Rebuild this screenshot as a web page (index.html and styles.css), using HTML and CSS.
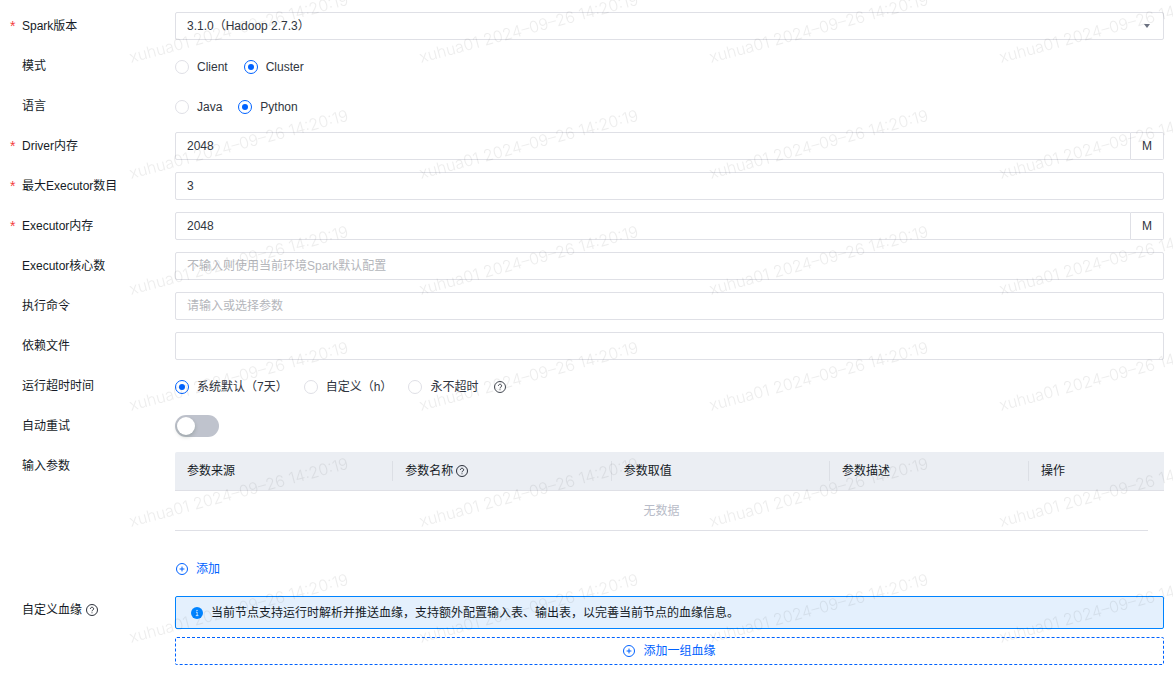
FILE: index.html
```html
<!DOCTYPE html>
<html lang="zh-CN">
<head>
<meta charset="utf-8">
<meta name="viewport" content="width=device-width, initial-scale=1">
<title>Spark节点配置</title>
<link rel="stylesheet" href="styles.css">
</head>
<body>
<svg class="sprite" aria-hidden="true">
  <symbol id="icon-help" viewBox="0 0 12 12">
    <circle cx="6" cy="6" r="5.5" fill="none" stroke="currentColor" stroke-width=".9"/>
    <path d="M4.4 4.8a1.6 1.5 0 1 1 2.5 1.2c-.6.4-.9.7-.9 1.3" fill="none" stroke="currentColor" stroke-width=".9"/>
    <circle cx="6" cy="8.7" r=".5" fill="currentColor"/>
  </symbol>
  <symbol id="icon-plus" viewBox="0 0 12 12">
    <circle cx="6" cy="6" r="5.5" fill="none" stroke="currentColor"/>
    <path d="M6 3.6v4.8M3.6 6h4.8" fill="none" stroke="currentColor"/>
  </symbol>
  <symbol id="icon-info" viewBox="0 0 12 12">
    <circle cx="6" cy="6" r="6" fill="#0083ff"/>
    <path d="M5 5.2h1.2v3.3M4.8 8.6h2.6" fill="none" stroke="#d6eaff" stroke-width=".9"/>
    <circle cx="6" cy="3.4" r=".7" fill="#d6eaff"/>
  </symbol>
</svg>

<form class="form">
  <div class="row">
    <label class="label required" for="version">Spark版本</label>
    <div class="select-box">
      <select class="field" id="version"><option>3.1.0（Hadoop 2.7.3）</option></select>
      <svg class="caret" viewBox="0 0 6 4" aria-hidden="true"><path d="M0 0h6L3 4z" fill="#6b7180"/></svg>
    </div>
  </div>
  <div class="row" role="radiogroup" aria-labelledby="mode">
    <span class="label" id="mode">模式</span>
    <div class="radios">
      <label class="radio"><input type="radio" name="mode">Client</label>
      <label class="radio"><input type="radio" name="mode" checked>Cluster</label>
    </div>
  </div>
  <div class="row" role="radiogroup" aria-labelledby="language">
    <span class="label" id="language">语言</span>
    <div class="radios">
      <label class="radio"><input type="radio" name="language">Java</label>
      <label class="radio"><input type="radio" name="language" checked>Python</label>
    </div>
  </div>
  <div class="row">
    <label class="label required" for="driver">Driver内存</label>
    <div class="group"><input class="field" id="driver" type="text" value="2048"><span class="unit">M</span></div>
  </div>
  <div class="row">
    <label class="label required" for="executors">最大Executor数目</label>
    <input class="field" id="executors" type="text" value="3">
  </div>
  <div class="row">
    <label class="label required" for="memory">Executor内存</label>
    <div class="group"><input class="field" id="memory" type="text" value="2048"><span class="unit">M</span></div>
  </div>
  <div class="row">
    <label class="label" for="cores">Executor核心数</label>
    <input class="field" id="cores" type="text" placeholder="不输入则使用当前环境Spark默认配置">
  </div>
  <div class="row">
    <label class="label" for="command">执行命令</label>
    <input class="field" id="command" type="text" placeholder="请输入或选择参数">
  </div>
  <div class="row">
    <label class="label" for="files">依赖文件</label>
    <input class="field" id="files" type="text">
  </div>
  <div class="row" role="radiogroup" aria-labelledby="timeout">
    <span class="label" id="timeout">运行超时时间</span>
    <div class="radios">
      <label class="radio"><input type="radio" name="timeout" checked>系统默认（7天）</label>
      <label class="radio"><input type="radio" name="timeout">自定义（h）</label>
      <label class="radio"><input type="radio" name="timeout">永不超时</label>
      <svg class="icon"><use href="#icon-help"/></svg>
    </div>
  </div>
  <div class="row">
    <label class="label" for="retry">自动重试</label>
    <div class="switch-box"><input class="switch" id="retry" type="checkbox" role="switch"></div>
  </div>
  <div class="row">
    <span class="label" id="params">输入参数</span>
    <div>
      <table class="table" aria-labelledby="params">
        <colgroup><col><col><col><col class="col-desc"><col class="col-action"><col class="col-gutter"></colgroup>
        <thead>
          <tr>
            <th><div class="cell">参数来源</div></th>
            <th><div class="cell">参数名称<svg class="icon"><use href="#icon-help"/></svg></div></th>
            <th><div class="cell">参数取值</div></th>
            <th><div class="cell">参数描述</div></th>
            <th><div class="cell">操作</div></th>
            <th></th>
          </tr>
        </thead>
        <tbody><tr><td class="empty" colspan="5">无数据</td><td></td></tr></tbody>
      </table>
      <button class="add" type="button"><svg class="icon"><use href="#icon-plus"/></svg>添加</button>
    </div>
  </div>
  <div class="row">
    <span class="label">自定义血缘<svg class="icon"><use href="#icon-help"/></svg></span>
    <div class="lineage">
      <div class="alert"><svg class="icon"><use href="#icon-info"/></svg><span>当前节点支持运行时解析并推送血缘，支持额外配置输入表、输出表，以完善当前节点的血缘信息。</span></div>
      <button class="add-group" type="button"><svg class="icon"><use href="#icon-plus"/></svg>添加一组血缘</button>
    </div>
  </div>
</form>

<svg class="watermark" aria-hidden="true">
  <defs>
    <pattern id="mark" x="0" y="-35" width="290" height="116" patternUnits="userSpaceOnUse">
      <text class="mark-text" transform="translate(11 98) rotate(-15)">xuhua01 2024–09–26 14:20:19</text>
    </pattern>
  </defs>
  <rect width="100%" height="100%" fill="url(#mark)"/>
</svg>
</body>
</html>
```

FILE: styles.css
```css
* { box-sizing: border-box; }

body {
  position: relative;
  min-height: 100vh;
  margin: 0;
  background: #fff;
  color: #151b26;
  font: 12px/20px "Liberation Sans", "Noto Sans CJK SC", sans-serif;
}

input, select, button { font: inherit; color: inherit; }

.sprite { position: absolute; width: 0; height: 0; }

.form {
  display: flex;
  flex-direction: column;
  gap: 12px;
  padding: 12px 9px 20px 10px;
}

.row {
  display: grid;
  grid-template-columns: 165px minmax(0, 1fr);
  align-items: start;
}

.label {
  display: flex;
  align-items: center;
  height: 28px;
  padding-left: 12px;
  gap: 4px;
}

.required { padding-left: 0; gap: 0; }
.required::before { content: "*"; width: 12px; color: #f33e3e; font-size: 14px; }

.field {
  display: block;
  width: 100%;
  min-width: 0;
  height: 28px;
  margin: 0;
  padding: 0 11px;
  border: 1px solid #dfe0e6;
  border-radius: 2px;
  background: #fff;
  color: #303540;
  outline: none;
  appearance: none;
}
.field::placeholder { color: #b4b6bb; opacity: 1; }

.select-box { position: relative; }
.caret { position: absolute; top: 12px; right: 14px; width: 6px; height: 4px; pointer-events: none; }

.group { display: flex; }
.group .field { flex: 1; border-radius: 2px 0 0 2px; }
.unit {
  width: 33px;
  border: 1px solid #dfe0e6;
  border-left: 0;
  border-radius: 0 2px 2px 0;
  color: #303540;
  line-height: 26px;
  text-align: center;
}

.radios { display: flex; align-items: center; gap: 16px; height: 28px; padding-top: 2px; color: #303540; }
.radio { display: flex; align-items: center; gap: 8px; }
.radio input {
  display: grid;
  place-items: center;
  width: 14px;
  height: 14px;
  margin: 0;
  border: 1px solid #dfe0e6;
  border-radius: 50%;
  background: #fff;
  appearance: none;
}
.radio input:checked { border-color: #0062ff; }
.radio input:checked::before { content: ""; width: 6px; height: 6px; border-radius: 50%; background: #0062ff; }

.icon { flex: none; width: 12px; height: 12px; }

.switch-box { display: flex; align-items: center; height: 28px; }
.switch {
  width: 44px;
  height: 22px;
  margin: 0;
  padding: 2px;
  border-radius: 11px;
  background: #bfc3cd;
  appearance: none;
}
.switch::before {
  content: "";
  display: block;
  width: 18px;
  height: 18px;
  border-radius: 50%;
  background: #fff;
  box-shadow: 0 2px 4px rgba(0, 35, 11, .2);
}

.table { width: 100%; border-collapse: separate; border-spacing: 0; table-layout: fixed; }
.col-desc { width: 199px; }
.col-action { width: 119px; }
.col-gutter { width: 16px; }
.table th {
  height: 39px;
  padding: 0;
  border-bottom: 1px solid #dfe0e6;
  background: #ebeef3;
  font-weight: 400;
  text-align: left;
}
.table th:first-child { border-top-left-radius: 2px; }
.cell { display: flex; align-items: center; gap: 3px; height: 20px; padding-left: 12px; border-right: 1px solid #dcdfe5; }
th:nth-child(5) .cell { border-right: 0; }
.empty {
  height: 40px;
  padding: 0;
  border-bottom: 1px solid #dfe0e6;
  color: #b8bcc8;
  text-align: center;
}

.add, .add-group {
  display: flex;
  align-items: center;
  gap: 8px;
  height: 28px;
  border: 0;
  background: none;
  color: #0062ff;
}
.add { margin-top: 24px; margin-bottom: 1px; padding: 0 1px; }

.lineage { display: flex; flex-direction: column; gap: 8px; }
.alert {
  display: flex;
  align-items: center;
  gap: 8px;
  min-height: 33px;
  padding: 0 15px;
  border: 1px solid #0083ff;
  border-radius: 2px;
  background: #e4f0fd;
}
.add-group { justify-content: center; border: 1px dashed #0062ff; border-radius: 2px; }

.watermark {
  position: absolute;
  top: 0;
  right: 0;
  left: 120px;
  width: calc(100% - 120px);
  height: 100%;
  pointer-events: none;
}
.mark-text { fill: #000; fill-opacity: .07; font: 300 16px Inter, sans-serif; }
```
